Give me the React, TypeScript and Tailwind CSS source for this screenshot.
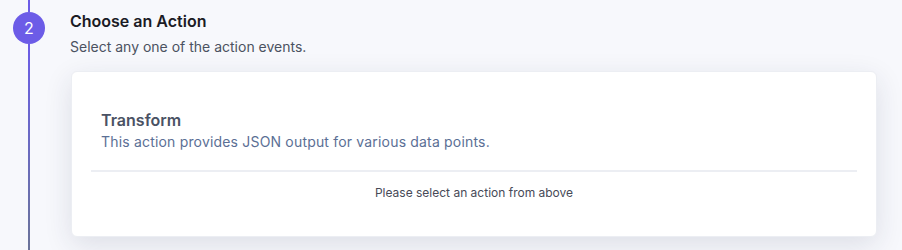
import React from "react";

export default function App() {
  return (
    <div className="w-[902px] h-[250px] overflow-hidden bg-[#f7f8fc] flex pl-[13px]" style={{ fontFamily: "Inter, 'Noto Sans', sans-serif" }}>
      <div className="w-[32px] flex flex-col items-center shrink-0">
        <div className="w-[2px] h-[12px] bg-[#6c5ce7]" />
        <div className="w-[32px] h-[32px] rounded-full bg-[#6c5ce7] text-white flex items-center justify-center text-[16px] leading-none">2</div>
        <div className="w-[2px] flex-1 bg-gradient-to-b from-[#6c5ce7] to-[#6b7399]" />
      </div>
      <div className="ml-[25px] pt-[9px] flex flex-col">
        <div className="text-[16px] leading-[24px] font-semibold text-[#1b1b25]">Choose an Action</div>
        <div className="mt-[4px] text-[14px] leading-[20px] text-[#4b5261]">Select any one of the action events.</div>
        <div className="mt-[14px] ml-[1px] w-[806px] h-[166px] bg-white rounded-[6px] border border-[#eceef3] shadow-[0_8px_28px_rgba(30,40,70,0.12)] px-[19px] pt-[36px]">
          <div className="px-[10px]">
            <div className="text-[16px] leading-[24px] font-semibold text-[#4a5264]">Transform</div>
            <div className="text-[14px] leading-[20px] tracking-[0.18px] text-[#5b6f95]">This action provides JSON output for various data points.</div>
          </div>
          <div className="mt-[18px] h-[2px] bg-[#eceef3]" />
          <div className="mt-[13px] text-center text-[12px] leading-[16px] text-[#474a57]">Please select an action from above</div>
        </div>
      </div>
    </div>
  );
}
